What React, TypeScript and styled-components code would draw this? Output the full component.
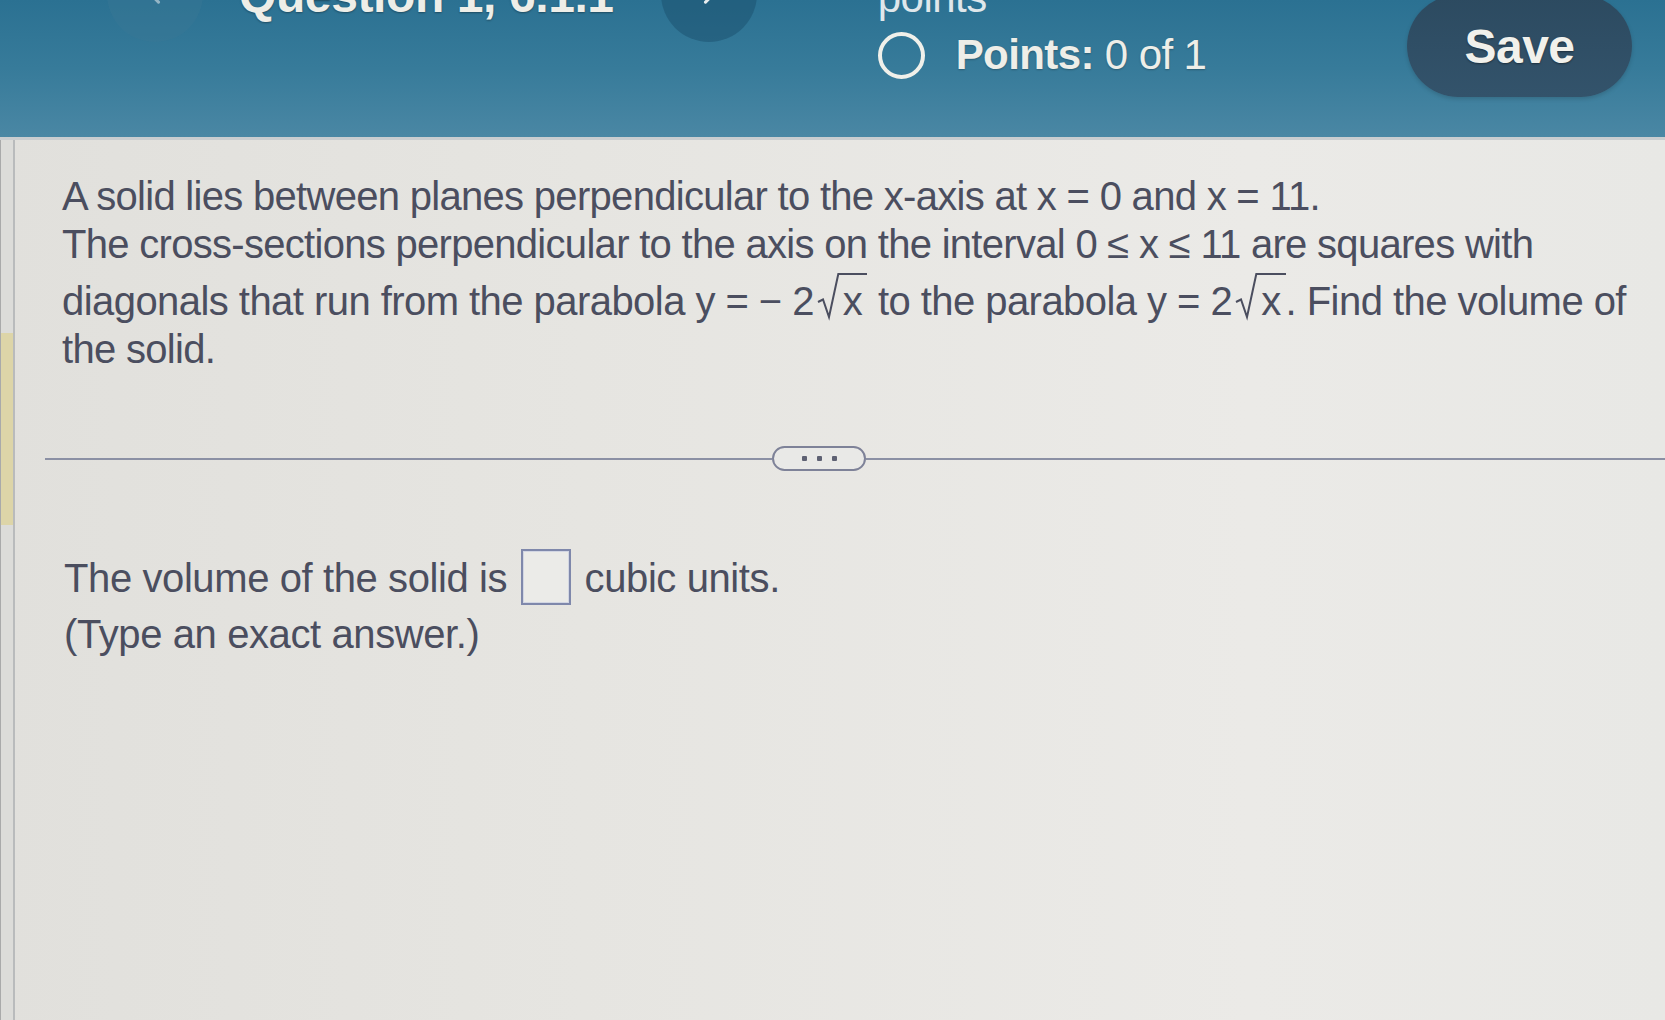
import React from "react";
import styled, { createGlobalStyle } from "styled-components";

const GlobalStyle = createGlobalStyle`
  html, body { margin: 0; padding: 0; }
  body {
    background: #e5e5e1;
    font-family: "Liberation Sans", Arial, sans-serif;
    overflow: hidden;
  }
`;

const Page = styled.div`
  width: 1665px;
  height: 1020px;
  display: flex;
  flex-direction: column;
  overflow: hidden;
  background: linear-gradient(90deg, #e1e0dc 0%, #e6e5e1 35%, #ebeae7 75%, #e8e8e5 100%);
`;

const Header = styled.header`
  flex: none;
  height: 140px;
  box-sizing: border-box;
  display: flex;
  align-items: flex-start;
  overflow: hidden;
  background: linear-gradient(180deg, #2b7192 0%, #377b9a 50%, #4a87a4 100%);
  border-bottom: 3px solid #c9cdd0;
  color: #eeeee8;
`;

const NavGroup = styled.div`
  display: flex;
  align-items: flex-start;
  margin: -54px 0 0 107px;
`;

const NavCircle = styled.div<{ $variant: "prev" | "next" }>`
  flex: none;
  width: 96px;
  height: 96px;
  border-radius: 50%;
  display: flex;
  align-items: center;
  justify-content: center;
  background: ${(p) =>
    p.$variant === "prev" ? "rgba(60, 120, 150, 0.35)" : "rgba(25, 75, 105, 0.45)"};
  color: ${(p) => (p.$variant === "prev" ? "rgba(230,235,238,0.55)" : "#e8ecee")};
`;

const Title = styled.div`
  margin: 26px 47px 0 36px;
  font-size: 48px;
  line-height: 48px;
  font-weight: 700;
  letter-spacing: -0.4px;
  white-space: nowrap;
  text-shadow: 0 1px 2px rgba(0, 0, 0, 0.35);
`;

const PointsGroup = styled.div`
  display: flex;
  flex-direction: column;
  gap: 13px;
  margin: -23px 0 0 121px;
`;

const PointsCaption = styled.div`
  font-size: 42px;
  line-height: 42px;
  letter-spacing: -0.5px;
  color: #dfe7eb;
`;

const PointsRow = styled.div`
  display: flex;
  align-items: center;
  gap: 31px;
  height: 46px;
`;

const RadioRing = styled.span`
  flex: none;
  width: 47px;
  height: 47px;
  box-sizing: border-box;
  border: 4.5px solid #f0f0ea;
  border-radius: 50%;
`;

const PointsText = styled.div`
  font-size: 42px;
  line-height: 46px;
  letter-spacing: -0.6px;
  white-space: nowrap;
  text-shadow: 0 1px 2px rgba(0, 0, 0, 0.25);
  strong { font-weight: 700; }
`;

const SaveButton = styled.button`
  flex: none;
  margin: -5px 33px 0 auto;
  width: 225px;
  height: 102px;
  border: none;
  border-radius: 51px;
  background: linear-gradient(180deg, #2c4a60 0%, #33536b 100%);
  color: #f1f1ec;
  font-family: "Liberation Sans", Arial, sans-serif;
  font-size: 48px;
  font-weight: 700;
  letter-spacing: -0.5px;
  display: flex;
  align-items: center;
  justify-content: center;
  text-shadow: 0 1px 2px rgba(0, 0, 0, 0.4);
  box-shadow: 0 2px 4px rgba(0, 0, 0, 0.15);
`;

const Body = styled.main`
  flex: 1;
  display: flex;
  min-height: 0;
`;

const SideStrip = styled.div`
  flex: none;
  width: 15px;
  box-sizing: border-box;
  border-left: 1px solid #a9aaaa;
  border-right: 2px solid #b9bbbc;
  background: #dcdcd9;
  display: flex;
  flex-direction: column;
`;

const StripMark = styled.div`
  margin-top: 193px;
  height: 192px;
  background: #ddd5a8;
`;

const Content = styled.div`
  flex: 1;
  display: flex;
  flex-direction: column;
  padding-top: 32px;
  color: #4b4e5f;
`;

const QuestionBlock = styled.div`
  padding-left: 47px;
  font-size: 40px;
  line-height: 48px;
  letter-spacing: -0.7px;
`;

const QLine = styled.div<{ $tall?: boolean }>`
  white-space: nowrap;
  padding-top: ${(p) => (p.$tall ? 5 : 0)}px;
  letter-spacing: ${(p) => (p.$tall ? "-0.55px" : "inherit")};
`;

const RadicalSign = styled.svg`
  width: 22px;
  height: 46px;
  vertical-align: -4px;
  margin-left: 3px;
  overflow: visible;
`;

const Radicand = styled.span`
  display: inline-block;
  line-height: 40px;
  padding: 6px 5px 0 4px;
  border-top: 2px solid currentColor;
`;

const Divider = styled.div`
  display: flex;
  align-items: center;
  margin: 73px 0 0 30px;
`;

const Rule = styled.div<{ $width?: number }>`
  height: 2px;
  background: #8b90a4;
  ${(p) => (p.$width ? `width: ${p.$width}px; flex: none;` : "flex: 1;")}
`;

const MorePill = styled.div`
  flex: none;
  width: 94px;
  height: 25px;
  box-sizing: border-box;
  border: 2.5px solid #7e8298;
  border-radius: 13px;
  background: #e9e9e7;
  display: flex;
  align-items: center;
  justify-content: center;
  gap: 10px;
`;

const Dot = styled.span`
  width: 5px;
  height: 5px;
  border-radius: 1px;
  background: #5e6173;
`;

const AnswerBlock = styled.div`
  margin-top: 78px;
  padding-left: 49px;
  font-size: 40px;
  line-height: 56px;
  letter-spacing: -0.4px;
`;

const AnswerLine = styled.div`
  white-space: nowrap;
`;

const AnswerBox = styled.span`
  display: inline-block;
  width: 50px;
  height: 56px;
  box-sizing: border-box;
  margin: 0 3px;
  vertical-align: -13px;
  border: 2px solid #7f88ab;
  box-shadow: inset 0 0 0 1px #d2d6e3;
  background: #ebebe8;
`;

const Chevron = ({ dir }: { dir: "left" | "right" }) => (
  <svg width="28" height="28" viewBox="0 0 24 24" fill="none" stroke="currentColor"
    strokeWidth="2.6" strokeLinecap="round" strokeLinejoin="round">
    {dir === "left" ? <polyline points="15 5 8 12 15 19" /> : <polyline points="9 5 16 12 9 19" />}
  </svg>
);

const Sqrt = ({ children }: { children: React.ReactNode }) => (
  <>
    <RadicalSign viewBox="0 0 22 46">
      <path d="M1 29 L6 26.5 L12 44 L21.3 1 L22 1" fill="none" stroke="currentColor"
        strokeWidth="2" strokeLinejoin="miter" />
    </RadicalSign>
    <Radicand>{children}</Radicand>
  </>
);

export default function App() {
  return (
    <Page>
      <GlobalStyle />
      <Header>
        <NavGroup>
          <NavCircle $variant="prev"><Chevron dir="left" /></NavCircle>
          <Title>Question 1, 6.1.1</Title>
          <NavCircle $variant="next"><Chevron dir="right" /></NavCircle>
        </NavGroup>
        <PointsGroup>
          <PointsCaption>points</PointsCaption>
          <PointsRow>
            <RadioRing />
            <PointsText><strong>Points:</strong> 0 of 1</PointsText>
          </PointsRow>
        </PointsGroup>
        <SaveButton>Save</SaveButton>
      </Header>
      <Body>
        <SideStrip>
          <StripMark />
        </SideStrip>
        <Content>
          <QuestionBlock>
            <QLine>A solid lies between planes perpendicular to the x-axis at x = 0 and x = 11.</QLine>
            <QLine>The cross-sections perpendicular to the axis on the interval 0 ≤ x ≤ 11 are squares with</QLine>
            <QLine $tall>
              diagonals that run from the parabola y = − 2<Sqrt>x</Sqrt> to the parabola y = 2<Sqrt>x</Sqrt>. Find the volume of
            </QLine>
            <QLine>the solid.</QLine>
          </QuestionBlock>
          <Divider>
            <Rule $width={727} />
            <MorePill>
              <Dot />
              <Dot />
              <Dot />
            </MorePill>
            <Rule />
          </Divider>
          <AnswerBlock>
            <AnswerLine>
              The volume of the solid is <AnswerBox /> cubic units.
            </AnswerLine>
            <AnswerLine>(Type an exact answer.)</AnswerLine>
          </AnswerBlock>
        </Content>
      </Body>
    </Page>
  );
}
